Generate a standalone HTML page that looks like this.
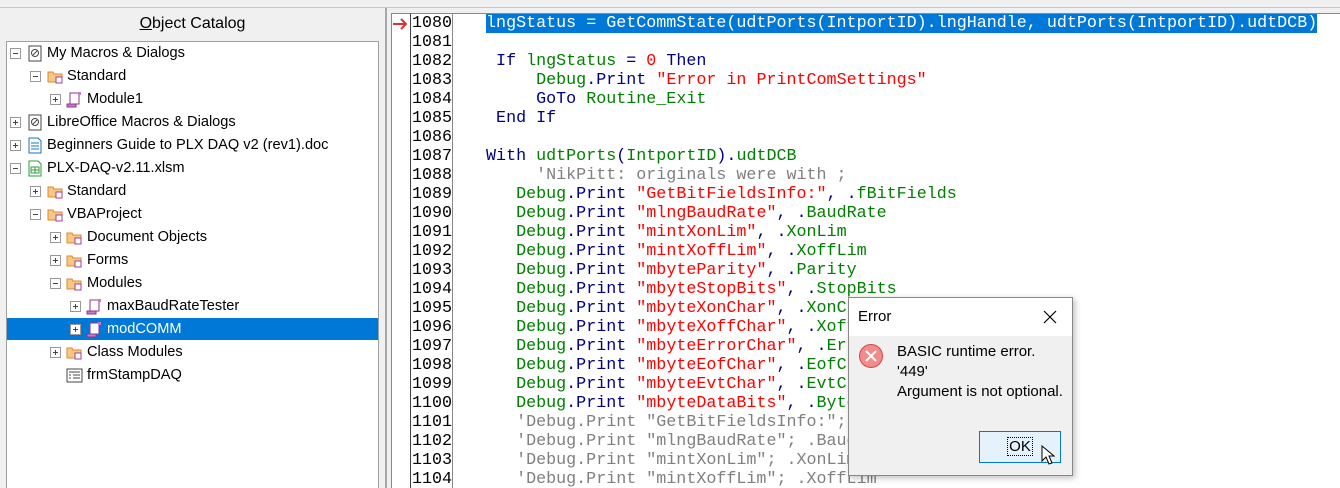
<!DOCTYPE html>
<html><head><meta charset="utf-8"><style>
*{margin:0;padding:0;box-sizing:border-box}
html,body{width:1340px;height:488px;overflow:hidden}
body{background:#f0f0f0;position:relative;font-family:"Liberation Sans",sans-serif}
.abs{position:absolute}
#top{left:0;top:0;width:1340px;height:8px;background:#f0f0f0;border-bottom:1px solid #c8c8c8}
#title{left:0;width:385px;top:15px;text-align:center;font-size:16px;color:#000}
#tree{left:6px;top:41px;width:373px;height:447px;background:#fff;border:1px solid #a0a0a0;border-bottom:none}
.row{position:absolute;height:23px;font-size:14.6px;line-height:23px;color:#000;white-space:nowrap}
.exp{position:absolute;top:6px;width:11px;height:11px;border:1px solid #999;background:#fff}
.exp:before{content:"";position:absolute;left:2px;top:4px;width:5px;height:1px;background:#444}
.exp.p:after{content:"";position:absolute;left:4px;top:2px;width:1px;height:5px;background:#444}
#split{left:385px;top:8px;width:2px;height:480px;background:#a8a8a8}
#gut{left:391px;top:13px;width:19px;height:475px;background:#fff;border-left:1px solid #888;border-top:1px solid #888}
#ln{left:410px;top:13px;width:43px;height:475px;background:#fff;border-left:1px solid #444;border-right:1px solid #888;border-top:1px solid #888}
#code{left:453px;top:13px;width:887px;height:475px;background:#fff;border-top:1px solid #888;overflow:hidden}
.ln,.cl{position:absolute;font-family:"Liberation Mono",monospace;font-size:16.7px;line-height:19px;height:19px;white-space:pre}
.ln{left:1px;color:#000}
.cl{left:3px;color:#000080}
.g{color:#008000}.r{color:#ff0000}.c{color:#808080}
.hl{background:#0078d7;color:#fff}
#dlg{left:848px;top:297px;width:225px;height:179px;background:#f0f0f0;border:1px solid #888;box-shadow:2px 2px 6px rgba(0,0,0,.25)}
#dt{position:absolute;left:0;top:0;width:223px;height:38px;background:#fff;font-size:15px;line-height:38px;padding-left:9px}
#msg{position:absolute;left:48px;top:44px;font-size:15px;line-height:20px}
#ok{position:absolute;left:130px;top:133px;width:82px;height:32px;border:1px solid #0078d7;background:#e5f1fb;font-size:15px;text-align:center;line-height:30px}
</style></head><body>
<div class="abs" id="top"></div>
<div class="abs" id="title"><u>O</u>bject Catalog</div>
<div class="abs" id="tree"></div>
<div class="abs" id="split"></div>
<svg class="abs" style="left:0;top:0" width="385" height="488">
<defs>
<g id="folder"><path d="M1 4h5l1 2h8v8H1z" fill="#f7c784" stroke="#e08a2c"/><rect x="9" y="9" width="6" height="6" fill="#fff" stroke="#a03ca0"/></g>
<g id="mod"><path d="M4 2h9v11H4z" fill="#fff" stroke="#8a3a8a"/><path d="M1 13h9v3H1z" fill="#c77ac7" stroke="#8a3a8a"/><rect x="12" y="1" width="3" height="3" fill="#c77ac7"/></g>
<g id="lib"><rect x="2" y="1" width="12" height="15" fill="#fff" stroke="#444"/><circle cx="8" cy="8" r="3.5" fill="none" stroke="#444"/><path d="M6 10l4-4" stroke="#444"/></g>
<g id="doc"><path d="M2 1h9l3 3v12H2z" fill="#fff" stroke="#1e73be"/><path d="M4 6h8M4 9h8M4 12h8" stroke="#1e73be"/></g>
<g id="xls"><path d="M2 1h9l3 3v12H2z" fill="#fff" stroke="#2e9e3e"/><rect x="4" y="7" width="8" height="6" fill="none" stroke="#2e9e3e"/><path d="M4 10h8M8 7v6" stroke="#2e9e3e"/></g>
<g id="frm"><rect x="1" y="2" width="15" height="13" fill="#fff" stroke="#444"/><path d="M3 5h11M3 8h2M7 8h7M3 11h2M7 11h7" stroke="#444"/></g>
</defs>
<rect x="7" y="318" width="371" height="22" fill="#0078d7"/>
<use href="#lib" x="27" y="45"/>
<use href="#folder" x="47" y="68"/>
<use href="#mod" x="66" y="91"/>
<use href="#lib" x="27" y="114"/>
<use href="#doc" x="27" y="137"/>
<use href="#xls" x="27" y="160"/>
<use href="#folder" x="47" y="183"/>
<use href="#folder" x="47" y="206"/>
<use href="#folder" x="66" y="229"/>
<use href="#folder" x="66" y="252"/>
<use href="#folder" x="66" y="275"/>
<use href="#mod" x="86" y="298"/>
<use href="#folder" x="66" y="344"/>
<use href="#frm" x="66" y="367"/>
</svg>
<div class="row" style="left:8px;top:42px;width:370px"><span class="exp" style="left:2px"></span><span style="position:absolute;left:39px">My Macros &amp; Dialogs</span></div>
<div class="row" style="left:8px;top:65px"><span class="exp" style="left:22px"></span><span style="position:absolute;left:59px">Standard</span></div>
<div class="row" style="left:8px;top:88px"><span class="exp p" style="left:42px"></span><span style="position:absolute;left:79px">Module1</span></div>
<div class="row" style="left:8px;top:111px"><span class="exp p" style="left:2px"></span><span style="position:absolute;left:39px">LibreOffice Macros &amp; Dialogs</span></div>
<div class="row" style="left:8px;top:134px"><span class="exp p" style="left:2px"></span><span style="position:absolute;left:39px">Beginners Guide to PLX DAQ v2 (rev1).doc</span></div>
<div class="row" style="left:8px;top:157px"><span class="exp" style="left:2px"></span><span style="position:absolute;left:39px">PLX-DAQ-v2.11.xlsm</span></div>
<div class="row" style="left:8px;top:180px"><span class="exp p" style="left:22px"></span><span style="position:absolute;left:59px">Standard</span></div>
<div class="row" style="left:8px;top:203px"><span class="exp" style="left:22px"></span><span style="position:absolute;left:59px">VBAProject</span></div>
<div class="row" style="left:8px;top:226px"><span class="exp p" style="left:42px"></span><span style="position:absolute;left:79px">Document Objects</span></div>
<div class="row" style="left:8px;top:249px"><span class="exp p" style="left:42px"></span><span style="position:absolute;left:79px">Forms</span></div>
<div class="row" style="left:8px;top:272px"><span class="exp" style="left:42px"></span><span style="position:absolute;left:79px">Modules</span></div>
<div class="row" style="left:8px;top:295px"><span class="exp p" style="left:62px"></span><span style="position:absolute;left:99px">maxBaudRateTester</span></div>
<div class="row" style="left:8px;top:318px;color:#fff"><span class="exp p" style="left:62px"></span><span style="position:absolute;left:99px">modCOMM</span></div>
<div class="row" style="left:8px;top:341px"><span class="exp p" style="left:42px"></span><span style="position:absolute;left:79px">Class Modules</span></div>
<div class="row" style="left:8px;top:364px"><span style="position:absolute;left:79px">frmStampDAQ</span></div>
<svg class="abs" style="left:0;top:0" width="385" height="488"><use href="#mod" x="86" y="321"/></svg>

<div class="abs" id="gut"><svg width="18" height="20" style="position:absolute;left:0;top:1px"><path d="M1 9h13M9 4l5 5-5 5" stroke="#e03030" stroke-width="2" fill="none"/></svg></div>
<div class="abs" id="ln">
<div class="ln" style="top:0">1080</div><div class="ln" style="top:19px">1081</div><div class="ln" style="top:38px">1082</div><div class="ln" style="top:57px">1083</div><div class="ln" style="top:76px">1084</div><div class="ln" style="top:95px">1085</div><div class="ln" style="top:114px">1086</div><div class="ln" style="top:133px">1087</div><div class="ln" style="top:152px">1088</div><div class="ln" style="top:171px">1089</div><div class="ln" style="top:190px">1090</div><div class="ln" style="top:209px">1091</div><div class="ln" style="top:228px">1092</div><div class="ln" style="top:247px">1093</div><div class="ln" style="top:266px">1094</div><div class="ln" style="top:285px">1095</div><div class="ln" style="top:304px">1096</div><div class="ln" style="top:323px">1097</div><div class="ln" style="top:342px">1098</div><div class="ln" style="top:361px">1099</div><div class="ln" style="top:380px">1100</div><div class="ln" style="top:399px">1101</div><div class="ln" style="top:418px">1102</div><div class="ln" style="top:437px">1103</div><div class="ln" style="top:456px">1104</div>
</div>
<div class="abs" id="code">
<div class="cl" style="top:0">   <span class="hl">lngStatus = GetCommState(udtPorts(IntportID).lngHandle, udtPorts(IntportID).udtDCB)</span></div>
<div class="cl" style="top:38px">    If <span class="g">lngStatus</span> = <span class="r">0</span> Then</div>
<div class="cl" style="top:57px">        <span class="g">Debug</span>.Print <span class="r">"Error in PrintComSettings"</span></div>
<div class="cl" style="top:76px">        GoTo <span class="g">Routine_Exit</span></div>
<div class="cl" style="top:95px">    End If</div>
<div class="cl" style="top:133px">   With <span class="g">udtPorts</span>(<span class="g">IntportID</span>).<span class="g">udtDCB</span></div>
<div class="cl c" style="top:152px">        'NikPitt: originals were with ;</div>
<div class="cl" style="top:171px">      <span class="g">Debug</span>.Print <span class="r">"GetBitFieldsInfo:"</span>, .<span class="g">fBitFields</span></div>
<div class="cl" style="top:190px">      <span class="g">Debug</span>.Print <span class="r">"mlngBaudRate"</span>, .<span class="g">BaudRate</span></div>
<div class="cl" style="top:209px">      <span class="g">Debug</span>.Print <span class="r">"mintXonLim"</span>, .<span class="g">XonLim</span></div>
<div class="cl" style="top:228px">      <span class="g">Debug</span>.Print <span class="r">"mintXoffLim"</span>, .<span class="g">XoffLim</span></div>
<div class="cl" style="top:247px">      <span class="g">Debug</span>.Print <span class="r">"mbyteParity"</span>, .<span class="g">Parity</span></div>
<div class="cl" style="top:266px">      <span class="g">Debug</span>.Print <span class="r">"mbyteStopBits"</span>, .<span class="g">StopBits</span></div>
<div class="cl" style="top:285px">      <span class="g">Debug</span>.Print <span class="r">"mbyteXonChar"</span>, .<span class="g">XonChar</span></div>
<div class="cl" style="top:304px">      <span class="g">Debug</span>.Print <span class="r">"mbyteXoffChar"</span>, .<span class="g">XoffChar</span></div>
<div class="cl" style="top:323px">      <span class="g">Debug</span>.Print <span class="r">"mbyteErrorChar"</span>, .<span class="g">ErrorChar</span></div>
<div class="cl" style="top:342px">      <span class="g">Debug</span>.Print <span class="r">"mbyteEofChar"</span>, .<span class="g">EofChar</span></div>
<div class="cl" style="top:361px">      <span class="g">Debug</span>.Print <span class="r">"mbyteEvtChar"</span>, .<span class="g">EvtChar</span></div>
<div class="cl" style="top:380px">      <span class="g">Debug</span>.Print <span class="r">"mbyteDataBits"</span>, .<span class="g">ByteSize</span></div>
<div class="cl c" style="top:399px">      'Debug.Print "GetBitFieldsInfo:"; .fBitFields</div>
<div class="cl c" style="top:418px">      'Debug.Print "mlngBaudRate"; .BaudRate</div>
<div class="cl c" style="top:437px">      'Debug.Print "mintXonLim"; .XonLim</div>
<div class="cl c" style="top:456px">      'Debug.Print "mintXoffLim"; .XoffLim</div>
</div>

<div class="abs" id="dlg">
<div id="dt">Error<svg style="position:absolute;left:194px;top:12px" width="14" height="14"><path d="M1 1l12 12M13 1L1 13" stroke="#000" stroke-width="1.2"/></svg></div>
<svg style="position:absolute;left:9px;top:45px" width="26" height="26"><circle cx="13" cy="13" r="11.5" fill="#f28b8b" stroke="#d04848"/><path d="M8 8l10 10M18 8L8 18" stroke="#fff" stroke-width="2"/></svg>
<div id="msg">BASIC runtime error.<br>'449'<br>Argument is not optional.</div>
<div id="ok"><span style="outline:1px dotted #000;padding:0 1px">OK</span></div>
<svg style="position:absolute;left:192px;top:147px" width="16" height="22"><path d="M1 1v15l4-4 3 7 3-1-3-7h5z" fill="#fff" stroke="#000"/></svg>
</div>
</body></html>
